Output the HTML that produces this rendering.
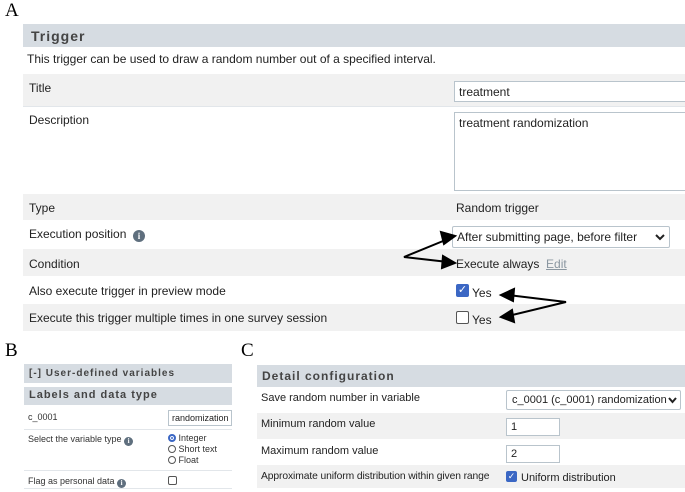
<!DOCTYPE html>
<html><head><meta charset="utf-8"><style>
*{margin:0;padding:0;box-sizing:border-box}
body{width:685px;height:492px;background:#fff;position:relative;overflow:hidden;font-family:"Liberation Sans",Arial,sans-serif;color:#222}
.a{position:absolute}
.L{font-family:"Liberation Serif",serif;font-size:19px;color:#000}
.hd{background:#d6dce2;color:#444;font-weight:bold;letter-spacing:1px}
.g{background:#f1f1f1}
.t{font-size:12px}
.inp{position:absolute;border:1px solid #b9c4cc;background:#fff;font-size:12px;padding:3px 4px;white-space:nowrap}
.info{display:inline-block;width:12px;height:12px;border-radius:50%;background:#5f6f7e;color:#fff;font-size:9px;font-weight:bold;text-align:center;line-height:12px;font-family:"Liberation Serif",serif;vertical-align:-1px}
.cb{position:absolute;width:13px;height:13px;border:1px solid #555;border-radius:2px;background:#fff}
.cbc{background:#3b67c4;border-color:#3b67c4;color:#fff;font-size:11px;line-height:11px;text-align:center}
.sep{position:absolute;height:1px;background:#e2e6ea}
.s{font-size:9px;color:#333}
.chev{position:absolute}
</style></head><body>
<div class="a L" style="left:5px;top:0">A</div>
<div class="a hd" style="left:23px;top:24px;width:662px;height:23px;font-size:14px;padding:4px 8px">Trigger</div>
<div class="a t" style="left:27px;top:52px">This trigger can be used to draw a random number out of a specified interval.</div>
<div class="a g" style="left:23px;top:74px;width:662px;height:32px"></div>
<div class="a t" style="left:29px;top:81px">Title</div>
<div class="inp" style="left:454px;top:81px;width:240px;height:21px">treatment</div>
<div class="sep" style="left:23px;top:106px;width:662px"></div>
<div class="a t" style="left:29px;top:113px">Description</div>
<div class="inp" style="left:454px;top:112px;width:240px;height:79px">treatment randomization</div>
<div class="a g" style="left:23px;top:194px;width:662px;height:26px"></div>
<div class="a t" style="left:29px;top:201px">Type</div>
<div class="a t" style="left:456px;top:201px">Random trigger</div>
<div class="a t" style="left:29px;top:227px">Execution position &nbsp;<span class="info">i</span></div>
<div class="inp" style="left:452px;top:226px;width:218px;height:22px;border-radius:2px">After submitting page, before filter</div>
<svg class="chev" style="left:655px;top:233px" width="10" height="8"><polyline points="1,2 5,6 9,2" fill="none" stroke="#222" stroke-width="2"/></svg>
<div class="a g" style="left:23px;top:249px;width:662px;height:27px"></div>
<div class="a t" style="left:29px;top:257px">Condition</div>
<div class="a t" style="left:456px;top:257px">Execute always &nbsp;<span style="color:#8a96a0;text-decoration:underline">Edit</span></div>
<div class="a t" style="left:29px;top:284px">Also execute trigger in preview mode</div>
<div class="cb cbc" style="left:456px;top:284px">&#10003;</div>
<div class="a t" style="left:472px;top:286px">Yes</div>
<div class="a g" style="left:23px;top:304px;width:662px;height:27px"></div>
<div class="a t" style="left:29px;top:311px">Execute this trigger multiple times in one survey session</div>
<div class="cb" style="left:456px;top:311px"></div>
<div class="a t" style="left:472px;top:313px">Yes</div>
<svg class="a" style="left:0;top:0" width="685" height="492">
<g stroke="#000" stroke-width="2" fill="#000">
<polyline points="448,239 404,257 448,262" fill="none"/>
<polygon points="455,236 441,232 444,244"/>
<polygon points="455,263 443,256 442,268"/>
<polyline points="508,295 566,302 508,316" fill="none"/>
<polygon points="501,295 514,289 513,301"/>
<polygon points="501,317 512,310 514,322"/>
</g></svg>

<div class="a L" style="left:5px;top:340px">B</div>
<div class="a hd" style="left:24px;top:364px;width:208px;height:19px;font-size:10px;padding:4px 5px">[-] User-defined variables</div>
<div class="a hd" style="left:24px;top:387px;width:208px;height:18px;font-size:11px;padding:2px 5px">Labels and data type</div>
<div class="a s" style="left:28px;top:412px">c_0001</div>
<div class="inp" style="left:168px;top:410px;width:64px;height:16px;font-size:9px;padding:2px 3px">randomization</div>
<div class="sep" style="left:24px;top:429px;width:208px"></div>
<div class="a s" style="left:28px;top:434px">Select the variable type <span class="info" style="width:9px;height:9px;font-size:7px;line-height:9px">i</span></div>
<div class="a s" style="left:168px;top:433px;line-height:11px"><span style="display:inline-block;width:8px;height:8px;border-radius:50%;border:2px solid #3b67c4;vertical-align:-1px;background:#3b67c4;box-shadow:inset 0 0 0 1px #fff"></span> Integer<br><span style="display:inline-block;width:8px;height:8px;border-radius:50%;border:1px solid #555;vertical-align:-1px"></span> Short text<br><span style="display:inline-block;width:8px;height:8px;border-radius:50%;border:1px solid #555;vertical-align:-1px"></span> Float</div>
<div class="sep" style="left:24px;top:470px;width:208px"></div>
<div class="a s" style="left:28px;top:476px">Flag as personal data <span class="info" style="width:9px;height:9px;font-size:7px;line-height:9px">i</span></div>
<div class="cb" style="left:168px;top:476px;width:9px;height:9px"></div>
<div class="sep" style="left:24px;top:488px;width:208px"></div>

<div class="a L" style="left:241px;top:340px">C</div>
<div class="a hd" style="left:257px;top:365px;width:428px;height:22px;font-size:12px;padding:4px 5px">Detail configuration</div>
<div class="a t" style="left:261px;top:392px;font-size:11px">Save random number in variable</div>
<div class="inp" style="left:506px;top:390px;width:175px;height:20px;font-size:11px;padding:3px 5px;border-radius:2px">c_0001 (c_0001) randomization</div>
<svg class="chev" style="left:668px;top:397px" width="9" height="7"><polyline points="1,1 4.5,5 8,1" fill="none" stroke="#222" stroke-width="2"/></svg>
<div class="a g" style="left:257px;top:413px;width:428px;height:26px"></div>
<div class="a t" style="left:261px;top:418px;font-size:11px">Minimum random value</div>
<div class="inp" style="left:506px;top:418px;width:54px;height:18px;font-size:11px;padding:2px 4px">1</div>
<div class="a t" style="left:261px;top:445px;font-size:11px">Maximum random value</div>
<div class="inp" style="left:506px;top:445px;width:54px;height:18px;font-size:11px;padding:2px 4px">2</div>
<div class="a g" style="left:257px;top:465px;width:428px;height:23px"></div>
<div class="a t" style="left:261px;top:471px;font-size:10.3px;letter-spacing:-0.1px">Approximate uniform distribution within given range</div>
<div class="cb cbc" style="left:506px;top:471px;width:11px;height:11px;font-size:9px;line-height:9px">&#10003;</div>
<div class="a t" style="left:521px;top:472px;font-size:11px">Uniform distribution</div>
</body></html>
